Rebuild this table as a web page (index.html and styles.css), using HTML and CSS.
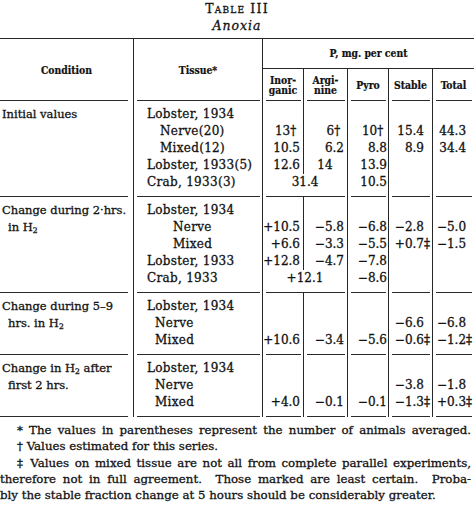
FILE: index.html
```html
<!DOCTYPE html>
<html lang="en">
<head>
<meta charset="utf-8">
<title>Table III – Anoxia</title>
<link rel="stylesheet" href="styles.css">
</head>
<body>
<div class="page">
  <div class="title">Table III</div>
  <div class="subtitle">Anoxia</div>
  <table class="tbl">
    <colgroup>
      <col class="w-cond"><col class="w-tis"><col class="w-i"><col class="w-a"><col class="w-p"><col class="w-s"><col class="w-t">
    </colgroup>
    <thead>
      <tr class="hrow1">
        <th rowspan="2" class="hc segl">Condition</th>
        <th rowspan="2" class="hc seg vl">Tissue*</th>
        <th colspan="5" class="hp vl">P, mg. per cent</th>
      </tr>
      <tr class="hrow2">
        <th class="seg vl">Inor-<br>ganic</th>
        <th class="seg vl">Argi-<br>nine</th>
        <th class="seg vl">Pyro</th>
        <th class="seg vl">Stable</th>
        <th class="seg vl">Total</th>
      </tr>
    </thead>
    <tbody>
      <tr class="first">
        <td rowspan="5" class="cond"><div class="cl">Initial values</div></td>
        <td class="tis vl">Lobster, 1934</td>
        <td class="ci vl"></td><td class="ca vl"></td><td class="cp vl"></td><td class="cs vl"></td><td class="ct vl"></td>
      </tr>
      <tr>
        <td class="tis vl in1">Nerve(20)</td>
        <td class="ci vl">13†<span class="g">.</span></td>
        <td class="ca vl">6†<span class="g">.</span></td>
        <td class="cp vl">10†<span class="g">.</span></td>
        <td class="cs vl">15.4<span class="g">‡</span></td>
        <td class="ct vl">44.3<span class="g">‡</span></td>
      </tr>
      <tr>
        <td class="tis vl in1">Mixed(12)</td>
        <td class="ci vl">10.5</td>
        <td class="ca vl">6.2</td>
        <td class="cp vl">8.8</td>
        <td class="cs vl">8.9<span class="g">‡</span></td>
        <td class="ct vl">34.4<span class="g">‡</span></td>
      </tr>
      <tr>
        <td class="tis vl">Lobster, 1933(5)</td>
        <td class="ci vl">12.6</td>
        <td class="ca vl">14<span class="g">.2</span></td>
        <td class="cp vl">13.9</td>
        <td class="cs vl"></td>
        <td class="ct vl"></td>
      </tr>
      <tr class="last">
        <td class="tis vl">Crab, 1933(3)</td>
        <td colspan="2" class="cia vl">31.4</td>
        <td class="cp vl">10.5</td>
        <td class="cs vl"></td>
        <td class="ct vl"></td>
      </tr>

      <tr class="first">
        <td rowspan="5" class="cond"><div class="cl">Change during 2·hrs.</div><div class="cl ind">in H<span class="sub">2</span></div></td>
        <td class="tis vl">Lobster, 1934</td>
        <td class="ci vl"></td><td class="ca vl"></td><td class="cp vl"></td><td class="cs vl"></td><td class="ct vl"></td>
      </tr>
      <tr>
        <td class="tis vl in2">Nerve</td>
        <td class="ci vl">+10.5</td>
        <td class="ca vl">−5.8</td>
        <td class="cp vl">−6.8</td>
        <td class="cs vl">−2.8<span class="g">‡</span></td>
        <td class="ct vl">−5.0<span class="g">‡</span></td>
      </tr>
      <tr>
        <td class="tis vl in2">Mixed</td>
        <td class="ci vl">+6.6</td>
        <td class="ca vl">−3.3</td>
        <td class="cp vl">−5.5</td>
        <td class="cs vl">+0.7‡</td>
        <td class="ct vl">−1.5<span class="g">‡</span></td>
      </tr>
      <tr>
        <td class="tis vl">Lobster, 1933</td>
        <td class="ci vl">+12.8</td>
        <td class="ca vl">−4.7</td>
        <td class="cp vl">−7.8</td>
        <td class="cs vl"></td>
        <td class="ct vl"></td>
      </tr>
      <tr class="last">
        <td class="tis vl">Crab, 1933</td>
        <td colspan="2" class="cia vl">+12.1</td>
        <td class="cp vl">−8.6</td>
        <td class="cs vl"></td>
        <td class="ct vl"></td>
      </tr>

      <tr class="first">
        <td rowspan="3" class="cond"><div class="cl">Change during 5–9</div><div class="cl ind">hrs. in H<span class="sub">2</span></div></td>
        <td class="tis vl">Lobster, 1934</td>
        <td class="ci vl"></td><td class="ca vl"></td><td class="cp vl"></td><td class="cs vl"></td><td class="ct vl"></td>
      </tr>
      <tr>
        <td class="tis vl in3">Nerve</td>
        <td class="ci vl"></td><td class="ca vl"></td><td class="cp vl"></td>
        <td class="cs vl">−6.6<span class="g">‡</span></td>
        <td class="ct vl">−6.8<span class="g">‡</span></td>
      </tr>
      <tr class="last">
        <td class="tis vl in3">Mixed</td>
        <td class="ci vl">+10.6</td>
        <td class="ca vl">−3.4</td>
        <td class="cp vl">−5.6</td>
        <td class="cs vl">−0.6‡</td>
        <td class="ct vl">−1.2‡</td>
      </tr>

      <tr class="first">
        <td rowspan="3" class="cond"><div class="cl">Change in H<span class="sub">2</span> after</div><div class="cl ind">first 2 hrs.</div></td>
        <td class="tis vl">Lobster, 1934</td>
        <td class="ci vl"></td><td class="ca vl"></td><td class="cp vl"></td><td class="cs vl"></td><td class="ct vl"></td>
      </tr>
      <tr>
        <td class="tis vl in3">Nerve</td>
        <td class="ci vl"></td><td class="ca vl"></td><td class="cp vl"></td>
        <td class="cs vl">−3.8<span class="g">‡</span></td>
        <td class="ct vl">−1.8<span class="g">‡</span></td>
      </tr>
      <tr class="last">
        <td class="tis vl in3">Mixed</td>
        <td class="ci vl">+4.0</td>
        <td class="ca vl">−0.1</td>
        <td class="cp vl">−0.1</td>
        <td class="cs vl">−1.3‡</td>
        <td class="ct vl">+0.3‡</td>
      </tr>
    </tbody>
  </table>
  <div class="notes">
    <div class="ln ind just">* The values in parentheses represent the number of animals averaged.</div>
    <div class="ln ind">† Values estimated for this series.</div>
    <div class="ln ind just">‡ Values on mixed tissue are not all from complete parallel experiments,</div>
    <div class="ln just">therefore not in full agreement. &nbsp;Those marked are least certain. &nbsp;Proba-</div>
    <div class="ln">bly the stable fraction change at 5 hours should be considerably greater.</div>
  </div>
</div>
</body>
</html>
```

FILE: styles.css
```css
html, body {
  margin: 0;
  padding: 0;
  background: #ffffff;
}

body {
  font-family: "DejaVu Serif", "Liberation Serif", serif;
  color: #121212;
  -webkit-text-stroke: 0.3px #121212;
}

.page {
  width: 474px;
}

.title {
  text-align: center;
  font-variant: small-caps;
  font-size: 12.5px;
  letter-spacing: 1.2px;
  line-height: 16px;
  padding-top: 1px;
}

.subtitle {
  text-align: center;
  font-style: italic;
  font-size: 12.5px;
  letter-spacing: 1px;
  line-height: 18px;
}

.tbl {
  width: 474px;
  table-layout: fixed;
  border-collapse: separate;
  border-spacing: 0;
  border-top: 1px solid #262626;
  margin-top: 3px;
  font-size: 12px;
}

.w-cond { width: 133px; }
.w-tis { width: 129px; }
.w-i { width: 41px; }
.w-a { width: 44px; }
.w-p { width: 41px; }
.w-s { width: 44px; }
.w-t { width: 42px; }

.vl {
  border-left: 1px solid #262626;
}

th {
  font-family: "DejaVu Serif Condensed", "DejaVu Serif", serif;
  font-stretch: condensed;
  font-weight: bold;
  font-size: 10.3px;
  line-height: 10.5px;
  padding: 0;
  text-align: center;
  vertical-align: middle;
  -webkit-text-stroke: 0.2px #121212;
}

.hrow1 th.hp {
  height: 29px;
  border-bottom: 1px solid #262626;
}

.hrow2 th {
  height: 32px;
}

.seg,
.last td {
  background-image: linear-gradient(#2a2a2a, #2a2a2a);
  background-repeat: no-repeat;
  background-position: 50% 100%;
  background-size: calc(100% - 5px) 1px;
}

.segl,
td.cond {
  background-image: linear-gradient(#2a2a2a, #2a2a2a);
  background-repeat: no-repeat;
  background-position: 0 100%;
  background-size: calc(100% - 5px) 1px;
}

td {
  padding: 0;
  line-height: 17px;
  vertical-align: top;
  white-space: nowrap;
}

.first td {
  padding-top: 5px;
}

.last td,
td.cond {
  padding-bottom: 6px;
}

td.cond {
  padding-left: 2px;
  font-size: 11.5px;
}

.cl {
  white-space: nowrap;
}

.cl.ind {
  padding-left: 6px;
}

.tis {
  padding-left: 13px;
  letter-spacing: 0.3px;
}

.tis.in1 { padding-left: 26px; }
.tis.in2 { padding-left: 39px; }
.tis.in3 { padding-left: 21px; }

.ci, .ca, .cp, .cs, .ct {
  text-align: right;
}

.ci { padding-right: 3px; }
.ca { padding-right: 3px; }
.cp { padding-right: 1px; }
.cs { padding-right: 2px; }
.ct { padding-right: 2px; }

.cia {
  text-align: center;
}

.g {
  visibility: hidden;
}

.sub {
  font-size: 0.66em;
  vertical-align: -0.25em;
  line-height: 0;
}

.notes {
  margin-top: 5px;
  width: 471px;
  font-size: 11.8px;
  line-height: 16.3px;
}

.ln {
  white-space: nowrap;
}

.ln.ind {
  padding-left: 17px;
}

.ln.just {
  text-align: justify;
  text-align-last: justify;
}
```
